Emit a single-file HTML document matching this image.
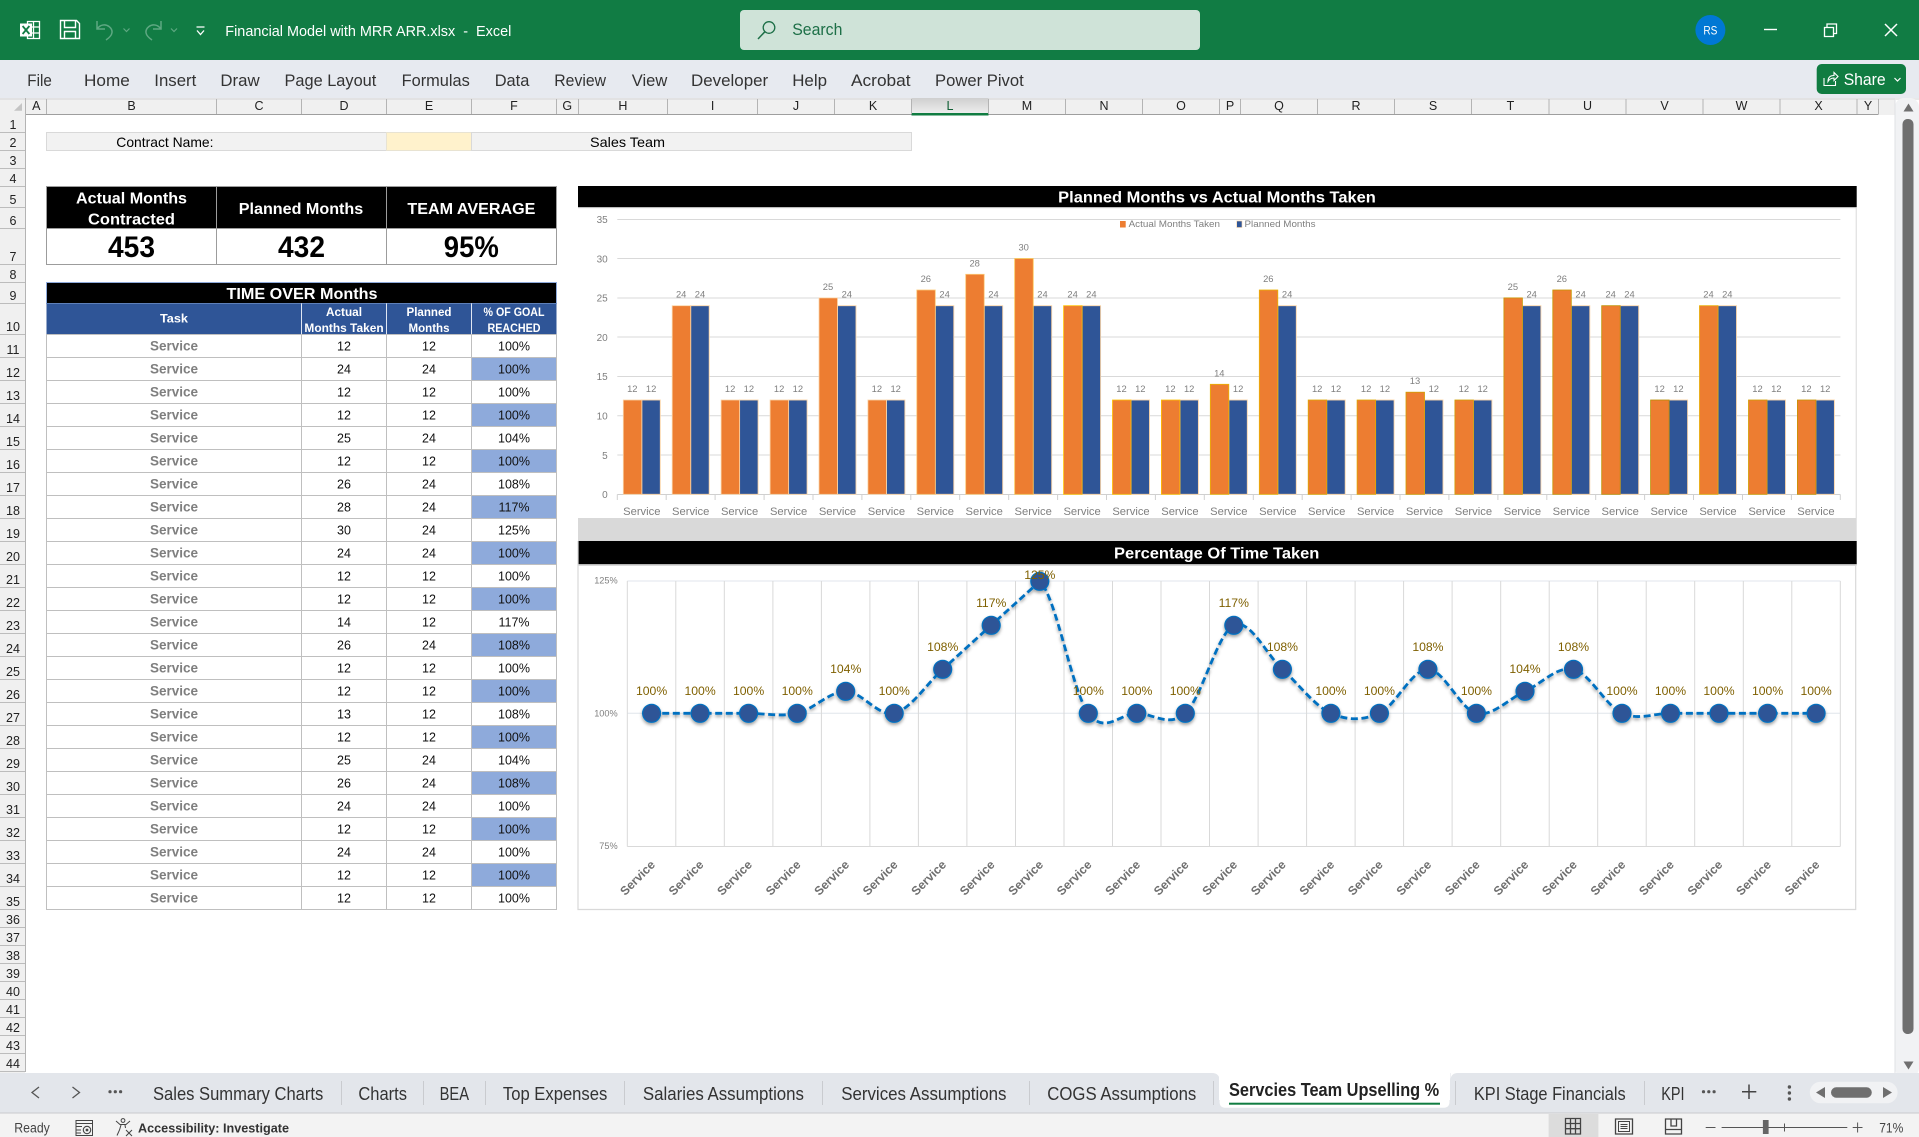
<!DOCTYPE html>
<html lang="en">
<head>
<meta charset="utf-8">
<title>Financial Model with MRR ARR.xlsx - Excel</title>
<style>
html,body{margin:0;padding:0;background:#fff;width:1919px;height:1137px;overflow:hidden}
svg{display:block}
text{font-family:"Liberation Sans",sans-serif;white-space:pre}
.rt text{fill:#333;font-size:17px}
.tb text{fill:#333;font-size:18.5px}
.rn text{fill:#222;font-size:12.5px;text-anchor:middle}
.cn text{fill:#222;font-size:12.5px;text-anchor:middle}
.s text{fill:#7f7f7f;font-size:13.5px;font-weight:bold;text-anchor:middle}
.n text{fill:#111;font-size:12.5px;text-anchor:middle}
.dl text{fill:#7f7f7f;font-size:9.4px;text-anchor:middle}
.ax text{fill:#7f7f7f;font-size:10px;text-anchor:end}
.cx text{fill:#7f7f7f;font-size:11.2px;text-anchor:middle}
.pl text{fill:#7f6000;font-size:12.2px;text-anchor:middle}
.rx text{fill:#6f6f6f;font-size:12.2px;font-weight:bold;text-anchor:middle}
.hd text{fill:#fff;font-size:12px;font-weight:bold;text-anchor:middle}
.kp text{fill:#fff;font-size:16px;font-weight:bold;text-anchor:middle}
.kv text{fill:#000;font-size:30px;font-weight:bold;text-anchor:middle}
</style>
</head>
<body>
<svg xmlns="http://www.w3.org/2000/svg" width="1919" height="1137" viewBox="0 0 1919 1137">
<defs>
<filter id="sh" x="-10%" y="-20%" width="120%" height="150%"><feDropShadow dx="0" dy="2" stdDeviation="1.6" flood-color="#000" flood-opacity=".38"/></filter>
<linearGradient id="rs" x1="0" y1="0" x2="0" y2="1"><stop offset="0" stop-color="#cfcfcf"/><stop offset="1" stop-color="#efefef"/></linearGradient>
</defs>

<!-- title bar -->
<rect x="0" y="0" width="1919" height="60" fill="#117c44"/>
<g>
<path d="M27.5 21.5H39.5V38.5H27.5ZM27.5 27H39.5M27.5 33H39.5M33.5 21.5V38.5" fill="none" stroke="#fff" stroke-width="1.3"/>
<rect x="20" y="23.5" width="12" height="13" fill="#fff"/>
<path d="M22.6 26 29.4 34M29.4 26 22.6 34" stroke="#117c44" stroke-width="1.8" fill="none"/>
<path d="M60.5 20.5H76.5L79.5 23.5V38.5H60.5ZM64.5 20.5V27.5H75.5V20.5M64.5 38.5V31.5H75.5V38.5" fill="none" stroke="#fff" stroke-width="1.4"/>
<path d="M97 21V29H105M97.5 28.5C100 25 105 23.5 109 26.5 113.5 30 113.5 35 106 40" fill="none" stroke="#5ea882" stroke-width="1.5"/>
<path d="M123.5 28.5 126.5 31.5 129.5 28.5" fill="none" stroke="#5ea882" stroke-width="1.2"/>
<path d="M161 21V29H153M160.5 28.5C158 25 153 23.5 149 26.5 144.5 30 144.5 35 152 40" fill="none" stroke="#5ea882" stroke-width="1.5"/>
<path d="M171 28.5 174 31.5 177 28.5" fill="none" stroke="#5ea882" stroke-width="1.2"/>
<path d="M196.5 27H204.5M197 30.5 200.5 34.5 204 30.5" fill="none" stroke="#fff" stroke-width="1.3"/>
</g>
<text x="225.3" y="36" font-size="15" fill="#fff" textLength="286" lengthAdjust="spacingAndGlyphs">Financial Model with MRR ARR.xlsx  -  Excel</text>
<rect x="740" y="10" width="460" height="40" rx="4" fill="#cfe3d8"/>
<circle cx="769" cy="27.5" r="5.8" fill="none" stroke="#1d6f47" stroke-width="1.3"/>
<path d="M764.8 31.8 758 39" fill="none" stroke="#1d6f47" stroke-width="1.5"/>
<text x="792.2" y="35" font-size="16.5" fill="#1d6f47" textLength="50.2" lengthAdjust="spacingAndGlyphs">Search</text>
<ellipse cx="1710.4" cy="30" rx="15" ry="15" fill="#0078d4"/>
<text x="1710.4" y="34.5" font-size="12" fill="#fff" text-anchor="middle" textLength="14" lengthAdjust="spacingAndGlyphs">RS</text>
<path d="M1764 29.5H1777" stroke="#fff" stroke-width="1.4" fill="none"/>
<path d="M1824.5 27.5H1833.5V36.5H1824.5ZM1827 27V24H1836.5V33.5H1834" fill="none" stroke="#fff" stroke-width="1.3"/>
<path d="M1885 24 1897 36M1897 24 1885 36" stroke="#fff" stroke-width="1.5" fill="none"/>

<!-- ribbon tabs -->
<rect x="0" y="60" width="1919" height="38" fill="#e7eaf0"/>
<g class="rt">
<text x="27.3" y="86" textLength="24.5" lengthAdjust="spacingAndGlyphs">File</text>
<text x="84" y="86" textLength="45.8" lengthAdjust="spacingAndGlyphs">Home</text>
<text x="154.3" y="86" textLength="42" lengthAdjust="spacingAndGlyphs">Insert</text>
<text x="220.4" y="86" textLength="39.2" lengthAdjust="spacingAndGlyphs">Draw</text>
<text x="284.5" y="86" textLength="91.8" lengthAdjust="spacingAndGlyphs">Page Layout</text>
<text x="401.6" y="86" textLength="68.2" lengthAdjust="spacingAndGlyphs">Formulas</text>
<text x="494.7" y="86" textLength="34.7" lengthAdjust="spacingAndGlyphs">Data</text>
<text x="554.3" y="86" textLength="51.7" lengthAdjust="spacingAndGlyphs">Review</text>
<text x="631.8" y="86" textLength="35.5" lengthAdjust="spacingAndGlyphs">View</text>
<text x="691" y="86" textLength="77.2" lengthAdjust="spacingAndGlyphs">Developer</text>
<text x="792.2" y="86" textLength="34.8" lengthAdjust="spacingAndGlyphs">Help</text>
<text x="851" y="86" textLength="59.6" lengthAdjust="spacingAndGlyphs">Acrobat</text>
<text x="935" y="86" textLength="88.7" lengthAdjust="spacingAndGlyphs">Power Pivot</text>
</g>
<rect x="1816.7" y="64" width="89.3" height="30" rx="5" fill="#107c41"/>
<path d="M1824 78V85.5H1835.5V81M1828 81.5C1828 77.5 1830 75.5 1834 75.5V72.5L1838 76.5 1834 80.5V78C1831.5 78 1829.5 79 1828 81.5Z" fill="none" stroke="#fff" stroke-width="1.1"/>
<text x="1843.7" y="85" font-size="17" fill="#fff" textLength="42" lengthAdjust="spacingAndGlyphs">Share</text>
<path d="M1894.5 78 1897.5 81 1900.5 78" fill="none" stroke="#fff" stroke-width="1.2"/>

<!-- column headers -->
<rect x="0" y="98" width="1895" height="17" fill="#f0f0f0"/>
<rect x="0" y="98" width="1919" height="2" fill="#d8d9db" opacity=".6"/>
<path d="M22 103V110.7H14Z" fill="#c4c4c4"/>
<rect x="911.5" y="98" width="77" height="16" fill="url(#rs)"/>
<path d="M26 114.5H1878.5" stroke="#9e9e9e" stroke-width="1" fill="none"/>
<rect x="911.5" y="113" width="77" height="2.5" fill="#107c41"/>
<path d="M25.5 98V1072M46.5 99V114M216.5 99V114M301.5 99V114M386.5 99V114M471.5 99V114M556.5 99V114M578.5 99V114M667.5 99V114M757.5 99V114M834.5 99V114M911.5 99V114M988.5 99V114M1065.5 99V114M1142.5 99V114M1219.5 99V114M1240.5 99V114M1317.5 99V114M1394.5 99V114M1471.5 99V114M1549 99V114M1626 99V114M1703 99V114M1780 99V114M1857 99V114M1878.5 99V114" stroke="#b4b4b4" stroke-width="1" fill="none"/>
<g class="cn">
<text x="36.3" y="110">A</text><text x="131.5" y="110">B</text><text x="259" y="110">C</text><text x="344" y="110">D</text><text x="429" y="110">E</text><text x="514" y="110">F</text><text x="567.3" y="110">G</text><text x="622.9" y="110">H</text><text x="712.6" y="110">I</text><text x="796" y="110">J</text><text x="873" y="110">K</text><text x="950" y="110" style="fill:#0f5f34">L</text><text x="1027" y="110">M</text><text x="1104" y="110">N</text><text x="1181" y="110">O</text><text x="1230" y="110">P</text><text x="1279" y="110">Q</text><text x="1356" y="110">R</text><text x="1433" y="110">S</text><text x="1510.4" y="110">T</text><text x="1587.5" y="110">U</text><text x="1664.5" y="110">V</text><text x="1741.5" y="110">W</text><text x="1818.5" y="110">X</text><text x="1868" y="110">Y</text>
</g>

<!-- row headers -->
<rect x="0" y="115" width="25" height="958" fill="#f0f0f0"/>
<path d="M0 132.5H25M0 150.5H25M0 168.5H25M0 186.5H25M0 207.5H25M0 228.5H25M0 264.5H25M0 282.5H25M0 303.5H25M0 334.5H25M0 357.5H25M0 380.5H25M0 403.5H25M0 426.5H25M0 449.5H25M0 472.5H25M0 495.5H25M0 518.5H25M0 541.5H25M0 564.5H25M0 587.5H25M0 610.5H25M0 633.5H25M0 656.5H25M0 679.5H25M0 702.5H25M0 725.5H25M0 748.5H25M0 771.5H25M0 794.5H25M0 817.5H25M0 840.5H25M0 863.5H25M0 886.5H25M0 909.5H25M0 927.5H25M0 945.5H25M0 963.5H25M0 981.5H25M0 999.5H25M0 1017.5H25M0 1035.5H25M0 1053.5H25M0 1071.5H25" stroke="#bcbcbc" stroke-width="1" fill="none"/>
<g class="rn">
<text x="13" y="129">1</text><text x="13" y="147">2</text><text x="13" y="165">3</text><text x="13" y="183">4</text><text x="13" y="204">5</text><text x="13" y="225">6</text><text x="13" y="261">7</text><text x="13" y="279">8</text><text x="13" y="300">9</text><text x="13" y="331">10</text><text x="13" y="354">11</text><text x="13" y="377">12</text><text x="13" y="400">13</text><text x="13" y="423">14</text><text x="13" y="446">15</text><text x="13" y="469">16</text><text x="13" y="492">17</text><text x="13" y="515">18</text><text x="13" y="538">19</text><text x="13" y="561">20</text><text x="13" y="584">21</text><text x="13" y="607">22</text><text x="13" y="630">23</text><text x="13" y="653">24</text><text x="13" y="676">25</text><text x="13" y="699">26</text><text x="13" y="722">27</text><text x="13" y="745">28</text><text x="13" y="768">29</text><text x="13" y="791">30</text><text x="13" y="814">31</text><text x="13" y="837">32</text><text x="13" y="860">33</text><text x="13" y="883">34</text><text x="13" y="906">35</text><text x="13" y="924">36</text><text x="13" y="942">37</text><text x="13" y="960">38</text><text x="13" y="978">39</text><text x="13" y="996">40</text><text x="13" y="1014">41</text><text x="13" y="1032">42</text><text x="13" y="1050">43</text><text x="13" y="1068">44</text>
</g>

<!-- contract row -->
<rect x="46.5" y="132.5" width="340" height="18" fill="#f2f2f2" stroke="#d9d9d9"/>
<rect x="386.5" y="132.5" width="85" height="18" fill="#fff2cc" stroke="#e8e3d2"/>
<rect x="471.5" y="132.5" width="440" height="18" fill="#f2f2f2" stroke="#d9d9d9"/>
<text x="116.3" y="147" font-size="14" fill="#000" textLength="97.2" lengthAdjust="spacingAndGlyphs">Contract Name:</text>
<text x="590" y="147" font-size="14" fill="#000" textLength="75" lengthAdjust="spacingAndGlyphs">Sales Team</text>

<!-- KPI block -->
<rect x="46.5" y="186.5" width="510" height="42" fill="#000"/>
<rect x="46.5" y="228.5" width="510" height="36" fill="#fff"/>
<path d="M46.5 186.5H556.5V264.5H46.5ZM46.5 228.5H556.5M216.5 186.5V264.5M386.5 186.5V264.5" fill="none" stroke="#9c9c9c" stroke-width="1"/>
<g class="kp">
<text x="131.5" y="203.5" textLength="111" lengthAdjust="spacingAndGlyphs">Actual Months</text>
<text x="131.5" y="224.5" textLength="87" lengthAdjust="spacingAndGlyphs">Contracted</text>
<text x="301" y="214" textLength="124.5" lengthAdjust="spacingAndGlyphs">Planned Months</text>
<text x="471.4" y="214" textLength="128" lengthAdjust="spacingAndGlyphs">TEAM AVERAGE</text>
</g>
<g class="kv">
<text x="131.5" y="257" textLength="47" lengthAdjust="spacingAndGlyphs">453</text>
<text x="301.5" y="257" textLength="47" lengthAdjust="spacingAndGlyphs">432</text>
<text x="471.3" y="257" textLength="55" lengthAdjust="spacingAndGlyphs">95%</text>
</g>

<!-- table -->
<rect x="46.5" y="282.5" width="510" height="21" fill="#000" stroke="#8eaadb"/>
<text x="302" y="299" font-size="16" font-weight="bold" fill="#fff" text-anchor="middle" textLength="151" lengthAdjust="spacingAndGlyphs">TIME OVER Months</text>
<rect x="46.5" y="303.5" width="510" height="31" fill="#2f5597"/>
<path d="M301.5 303.5V334M386.5 303.5V334M471.5 303.5V334" stroke="#dfe6f3" stroke-width="1" fill="none"/>
<g class="hd">
<text x="174" y="322.5" textLength="28" lengthAdjust="spacingAndGlyphs">Task</text>
<text x="344" y="316" textLength="36" lengthAdjust="spacingAndGlyphs">Actual</text>
<text x="344" y="332" textLength="79.2" lengthAdjust="spacingAndGlyphs">Months Taken</text>
<text x="429" y="316" textLength="45" lengthAdjust="spacingAndGlyphs">Planned</text>
<text x="429" y="332" textLength="41" lengthAdjust="spacingAndGlyphs">Months</text>
<text x="514" y="316" textLength="61" lengthAdjust="spacingAndGlyphs">% OF GOAL</text>
<text x="514" y="332" textLength="53" lengthAdjust="spacingAndGlyphs">REACHED</text>
</g>
<g fill="#8eaadb">
<rect x="472" y="358" width="84.5" height="22"/><rect x="472" y="404" width="84.5" height="22"/><rect x="472" y="450" width="84.5" height="22"/><rect x="472" y="496" width="84.5" height="22"/><rect x="472" y="542" width="84.5" height="22"/><rect x="472" y="588" width="84.5" height="22"/><rect x="472" y="634" width="84.5" height="22"/><rect x="472" y="680" width="84.5" height="22"/><rect x="472" y="726" width="84.5" height="22"/><rect x="472" y="772" width="84.5" height="22"/><rect x="472" y="818" width="84.5" height="22"/><rect x="472" y="864" width="84.5" height="22"/>
</g>
<path d="M46.5 334.5H556.5M46.5 357.5H556.5M46.5 380.5H556.5M46.5 403.5H556.5M46.5 426.5H556.5M46.5 449.5H556.5M46.5 472.5H556.5M46.5 495.5H556.5M46.5 518.5H556.5M46.5 541.5H556.5M46.5 564.5H556.5M46.5 587.5H556.5M46.5 610.5H556.5M46.5 633.5H556.5M46.5 656.5H556.5M46.5 679.5H556.5M46.5 702.5H556.5M46.5 725.5H556.5M46.5 748.5H556.5M46.5 771.5H556.5M46.5 794.5H556.5M46.5 817.5H556.5M46.5 840.5H556.5M46.5 863.5H556.5M46.5 886.5H556.5M46.5 909.5H556.5M46.5 334V910M301.5 334V910M386.5 334V910M471.5 334V910M556.5 334V910" stroke="#bfbfbf" stroke-width="1" fill="none"/>
<g class="s">
<text x="174" y="350.3">Service</text><text x="174" y="373.3">Service</text><text x="174" y="396.3">Service</text><text x="174" y="419.3">Service</text><text x="174" y="442.3">Service</text><text x="174" y="465.3">Service</text><text x="174" y="488.3">Service</text><text x="174" y="511.3">Service</text><text x="174" y="534.3">Service</text><text x="174" y="557.3">Service</text><text x="174" y="580.3">Service</text><text x="174" y="603.3">Service</text><text x="174" y="626.3">Service</text><text x="174" y="649.3">Service</text><text x="174" y="672.3">Service</text><text x="174" y="695.3">Service</text><text x="174" y="718.3">Service</text><text x="174" y="741.3">Service</text><text x="174" y="764.3">Service</text><text x="174" y="787.3">Service</text><text x="174" y="810.3">Service</text><text x="174" y="833.3">Service</text><text x="174" y="856.3">Service</text><text x="174" y="879.3">Service</text><text x="174" y="902.3">Service</text>
</g>
<g class="n">
<text x="344" y="350.3">12</text><text x="429" y="350.3">12</text><text x="514" y="350.3">100%</text>
<text x="344" y="373.3">24</text><text x="429" y="373.3">24</text><text x="514" y="373.3">100%</text>
<text x="344" y="396.3">12</text><text x="429" y="396.3">12</text><text x="514" y="396.3">100%</text>
<text x="344" y="419.3">12</text><text x="429" y="419.3">12</text><text x="514" y="419.3">100%</text>
<text x="344" y="442.3">25</text><text x="429" y="442.3">24</text><text x="514" y="442.3">104%</text>
<text x="344" y="465.3">12</text><text x="429" y="465.3">12</text><text x="514" y="465.3">100%</text>
<text x="344" y="488.3">26</text><text x="429" y="488.3">24</text><text x="514" y="488.3">108%</text>
<text x="344" y="511.3">28</text><text x="429" y="511.3">24</text><text x="514" y="511.3">117%</text>
<text x="344" y="534.3">30</text><text x="429" y="534.3">24</text><text x="514" y="534.3">125%</text>
<text x="344" y="557.3">24</text><text x="429" y="557.3">24</text><text x="514" y="557.3">100%</text>
<text x="344" y="580.3">12</text><text x="429" y="580.3">12</text><text x="514" y="580.3">100%</text>
<text x="344" y="603.3">12</text><text x="429" y="603.3">12</text><text x="514" y="603.3">100%</text>
<text x="344" y="626.3">14</text><text x="429" y="626.3">12</text><text x="514" y="626.3">117%</text>
<text x="344" y="649.3">26</text><text x="429" y="649.3">24</text><text x="514" y="649.3">108%</text>
<text x="344" y="672.3">12</text><text x="429" y="672.3">12</text><text x="514" y="672.3">100%</text>
<text x="344" y="695.3">12</text><text x="429" y="695.3">12</text><text x="514" y="695.3">100%</text>
<text x="344" y="718.3">13</text><text x="429" y="718.3">12</text><text x="514" y="718.3">108%</text>
<text x="344" y="741.3">12</text><text x="429" y="741.3">12</text><text x="514" y="741.3">100%</text>
<text x="344" y="764.3">25</text><text x="429" y="764.3">24</text><text x="514" y="764.3">104%</text>
<text x="344" y="787.3">26</text><text x="429" y="787.3">24</text><text x="514" y="787.3">108%</text>
<text x="344" y="810.3">24</text><text x="429" y="810.3">24</text><text x="514" y="810.3">100%</text>
<text x="344" y="833.3">12</text><text x="429" y="833.3">12</text><text x="514" y="833.3">100%</text>
<text x="344" y="856.3">24</text><text x="429" y="856.3">24</text><text x="514" y="856.3">100%</text>
<text x="344" y="879.3">12</text><text x="429" y="879.3">12</text><text x="514" y="879.3">100%</text>
<text x="344" y="902.3">12</text><text x="429" y="902.3">12</text><text x="514" y="902.3">100%</text>
</g>

<!-- chart 1 -->
<rect x="578" y="186" width="1278.7" height="21.3" fill="#000"/>
<path d="M578 207.8H1856.7M1856.2 207.8V518" stroke="#d9d9d9" stroke-width="1" fill="none"/>
<text x="1217" y="202.5" font-size="16" font-weight="bold" fill="#fff" text-anchor="middle" textLength="317.6" lengthAdjust="spacingAndGlyphs">Planned Months vs Actual Months Taken</text>
<rect x="578" y="518" width="1278.7" height="23" fill="#d9d9d9"/>
<path d="M617.3 219.5H1840.4M617.3 258.5H1840.4M617.3 298H1840.4M617.3 337H1840.4M617.3 376.5H1840.4M617.3 415.7H1840.4M617.3 455H1840.4" stroke="#d9d9d9" stroke-width="1" fill="none"/>
<path d="M617.3 494.5H1840.4M617.3 494.5V500M666.2 494.5V500M715.1 494.5V500M764.1 494.5V500M813 494.5V500M861.9 494.5V500M910.8 494.5V500M959.7 494.5V500M1008.7 494.5V500M1057.6 494.5V500M1106.5 494.5V500M1155.4 494.5V500M1204.3 494.5V500M1253.3 494.5V500M1302.2 494.5V500M1351.1 494.5V500M1400 494.5V500M1448.9 494.5V500M1497.9 494.5V500M1546.8 494.5V500M1595.7 494.5V500M1644.6 494.5V500M1693.5 494.5V500M1742.5 494.5V500M1791.4 494.5V500M1840.3 494.5V500" stroke="#d0d0d0" stroke-width="1" fill="none"/>
<g class="ax">
<text x="607.7" y="223">35</text><text x="607.7" y="262.5">30</text><text x="607.7" y="301.5">25</text><text x="607.7" y="341">20</text><text x="607.7" y="380">15</text><text x="607.7" y="419.5">10</text><text x="607.7" y="459">5</text><text x="607.7" y="498">0</text>
</g>
<rect x="1120" y="221" width="5.7" height="6.5" fill="#ed7d31"/>
<text x="1128.6" y="227" font-size="9.5" fill="#7f7f7f" textLength="91.4" lengthAdjust="spacingAndGlyphs">Actual Months Taken</text>
<rect x="1236.7" y="221" width="5.3" height="6.5" fill="#2f5597" stroke="#fbd5a8" stroke-width=".6"/>
<text x="1244.5" y="227" font-size="9.5" fill="#7f7f7f" textLength="71" lengthAdjust="spacingAndGlyphs">Planned Months</text>

<!-- blue bars -->
<g fill="#2f5597" stroke="#fbd5a8" stroke-width=".9">
<rect x="641.8" y="400" width="18.5" height="94.3"/>
<rect x="690.7" y="305.7" width="18.5" height="188.6"/>
<rect x="739.6" y="400" width="18.5" height="94.3"/>
<rect x="788.6" y="400" width="18.5" height="94.3"/>
<rect x="837.5" y="305.7" width="18.5" height="188.6"/>
<rect x="886.4" y="400" width="18.5" height="94.3"/>
<rect x="935.3" y="305.7" width="18.5" height="188.6"/>
<rect x="984.2" y="305.7" width="18.5" height="188.6"/>
<rect x="1033.2" y="305.7" width="18.5" height="188.6"/>
<rect x="1082.1" y="305.7" width="18.5" height="188.6"/>
<rect x="1131" y="400" width="18.5" height="94.3"/>
<rect x="1179.9" y="400" width="18.5" height="94.3"/>
<rect x="1228.8" y="400" width="18.5" height="94.3"/>
<rect x="1277.8" y="305.7" width="18.5" height="188.6"/>
<rect x="1326.7" y="400" width="18.5" height="94.3"/>
<rect x="1375.6" y="400" width="18.5" height="94.3"/>
<rect x="1424.5" y="400" width="18.5" height="94.3"/>
<rect x="1473.4" y="400" width="18.5" height="94.3"/>
<rect x="1522.4" y="305.7" width="18.5" height="188.6"/>
<rect x="1571.3" y="305.7" width="18.5" height="188.6"/>
<rect x="1620.2" y="305.7" width="18.5" height="188.6"/>
<rect x="1669.1" y="400" width="18.5" height="94.3"/>
<rect x="1718" y="305.7" width="18.5" height="188.6"/>
<rect x="1767" y="400" width="18.5" height="94.3"/>
<rect x="1815.9" y="400" width="18.5" height="94.3"/>
</g>
<!-- orange bars -->
<g fill="#ed7d31" stroke-width=".8">
<rect x="623.3" y="400" width="18.5" height="94.3" stroke="#fbd5a8"/>
<rect x="672.2" y="305.7" width="18.5" height="188.6" stroke="#fbd5a8"/>
<rect x="721.1" y="400" width="18.5" height="94.3" stroke="#fbd5a8"/>
<rect x="770.1" y="400" width="18.5" height="94.3" stroke="#fbd5a8"/>
<rect x="819" y="297.9" width="18.5" height="196.4" stroke="#fbd5a8"/>
<rect x="867.9" y="400" width="18.5" height="94.3" stroke="#fbd5a8"/>
<rect x="916.8" y="290" width="18.5" height="204.3" stroke="#fcc977"/>
<rect x="965.7" y="274.3" width="18.5" height="220" stroke="#fcc977"/>
<rect x="1014.7" y="258.6" width="18.5" height="235.7" stroke="#fcc24a"/>
<rect x="1063.6" y="305.7" width="18.5" height="188.6" stroke="#ffc000"/>
<rect x="1112.5" y="400" width="18.5" height="94.3" stroke="#ffc000"/>
<rect x="1161.4" y="400" width="18.5" height="94.3" stroke="#ffc000"/>
<rect x="1210.3" y="384.3" width="18.5" height="110" stroke="#ecb300"/>
<rect x="1259.3" y="290" width="18.5" height="204.3" stroke="#ecb300"/>
<rect x="1308.2" y="400" width="18.5" height="94.3" stroke="#e0a800"/>
<rect x="1357.1" y="400" width="18.5" height="94.3" stroke="#e0a800"/>
<rect x="1406" y="392.2" width="18.5" height="102.1" stroke="#d29e00"/>
<rect x="1454.9" y="400" width="18.5" height="94.3" stroke="#d29e00"/>
<rect x="1503.9" y="297.9" width="18.5" height="196.4" stroke="#c69500"/>
<rect x="1552.8" y="290" width="18.5" height="204.3" stroke="#c69500"/>
<rect x="1601.7" y="305.7" width="18.5" height="188.6" stroke="#bc8e00"/>
<rect x="1650.6" y="400" width="18.5" height="94.3" stroke="#b88d00"/>
<rect x="1699.5" y="305.7" width="18.5" height="188.6" stroke="#e6ac00"/>
<rect x="1748.5" y="400" width="18.5" height="94.3" stroke="#d29e00"/>
<rect x="1797.4" y="400" width="18.5" height="94.3" stroke="#c69500"/>
</g>
<!-- bar labels -->
<g class="dl">
<text x="632.3" y="392">12</text><text x="651.1" y="392">12</text>
<text x="681.2" y="297.7">24</text><text x="700" y="297.7">24</text>
<text x="730.1" y="392">12</text><text x="748.9" y="392">12</text>
<text x="779.1" y="392">12</text><text x="797.9" y="392">12</text>
<text x="828" y="289.9">25</text><text x="846.8" y="297.7">24</text>
<text x="876.9" y="392">12</text><text x="895.7" y="392">12</text>
<text x="925.8" y="282">26</text><text x="944.6" y="297.7">24</text>
<text x="974.7" y="266.3">28</text><text x="993.5" y="297.7">24</text>
<text x="1023.7" y="250.6">30</text><text x="1042.5" y="297.7">24</text>
<text x="1072.6" y="297.7">24</text><text x="1091.4" y="297.7">24</text>
<text x="1121.5" y="392">12</text><text x="1140.3" y="392">12</text>
<text x="1170.4" y="392">12</text><text x="1189.2" y="392">12</text>
<text x="1219.3" y="376.3">14</text><text x="1238.1" y="392">12</text>
<text x="1268.3" y="282">26</text><text x="1287.1" y="297.7">24</text>
<text x="1317.2" y="392">12</text><text x="1336" y="392">12</text>
<text x="1366.1" y="392">12</text><text x="1384.9" y="392">12</text>
<text x="1415" y="384.2">13</text><text x="1433.8" y="392">12</text>
<text x="1463.9" y="392">12</text><text x="1482.7" y="392">12</text>
<text x="1512.9" y="289.9">25</text><text x="1531.7" y="297.7">24</text>
<text x="1561.8" y="282">26</text><text x="1580.6" y="297.7">24</text>
<text x="1610.7" y="297.7">24</text><text x="1629.5" y="297.7">24</text>
<text x="1659.6" y="392">12</text><text x="1678.4" y="392">12</text>
<text x="1708.5" y="297.7">24</text><text x="1727.3" y="297.7">24</text>
<text x="1757.5" y="392">12</text><text x="1776.3" y="392">12</text>
<text x="1806.4" y="392">12</text><text x="1825.2" y="392">12</text>
</g>
<g class="cx">
<text x="641.8" y="515">Service</text><text x="690.7" y="515">Service</text><text x="739.6" y="515">Service</text><text x="788.6" y="515">Service</text><text x="837.5" y="515">Service</text><text x="886.4" y="515">Service</text><text x="935.3" y="515">Service</text><text x="984.2" y="515">Service</text><text x="1033.2" y="515">Service</text><text x="1082.1" y="515">Service</text><text x="1131" y="515">Service</text><text x="1179.9" y="515">Service</text><text x="1228.8" y="515">Service</text><text x="1277.8" y="515">Service</text><text x="1326.7" y="515">Service</text><text x="1375.6" y="515">Service</text><text x="1424.5" y="515">Service</text><text x="1473.4" y="515">Service</text><text x="1522.4" y="515">Service</text><text x="1571.3" y="515">Service</text><text x="1620.2" y="515">Service</text><text x="1669.1" y="515">Service</text><text x="1718" y="515">Service</text><text x="1767" y="515">Service</text><text x="1815.9" y="515">Service</text>
</g>

<!-- chart 2 -->
<rect x="578" y="541" width="1278.7" height="23.3" fill="#000"/>
<rect x="578" y="564.3" width="1278.7" height="1.7" fill="#d9d9d9"/>
<text x="1216.7" y="558.5" font-size="16" font-weight="bold" fill="#fff" text-anchor="middle" textLength="205.3" lengthAdjust="spacingAndGlyphs">Percentage Of Time Taken</text>
<path d="M578 541V909.5H1855.7V565" stroke="#d9d9d9" stroke-width="1.2" fill="none"/>
<path d="M627.3 581H1840.3M627.3 713.3H1840.3" stroke="#e0e6ec" stroke-width="1" fill="none"/>
<path d="M627.3 581V846.5M675.8 581V846.5M724.3 581V846.5M772.9 581V846.5M821.4 581V846.5M869.9 581V846.5M918.4 581V846.5M966.9 581V846.5M1015.5 581V846.5M1064 581V846.5M1112.5 581V846.5M1161 581V846.5M1209.5 581V846.5M1258.1 581V846.5M1306.6 581V846.5M1355.1 581V846.5M1403.6 581V846.5M1452.1 581V846.5M1500.7 581V846.5M1549.2 581V846.5M1597.7 581V846.5M1646.2 581V846.5M1694.7 581V846.5M1743.3 581V846.5M1791.8 581V846.5M1840.3 581V846.5M627.3 846.5H1840.3" stroke="#d9d9d9" stroke-width="1" fill="none"/>
<g font-size="9.2" fill="#7f7f7f" text-anchor="end">
<text x="617.7" y="583.5">125%</text>
<text x="617.7" y="716.5">100%</text>
<text x="617.7" y="849">75%</text>
</g>
<g filter="url(#sh)">
<path d="M651.6 713.3C667.8 713.3 683.9 713.3 700.1 713.3C716.3 713.3 732.4 713.3 748.6 713.3C764.8 713.3 781 717 797.2 713.3C813.4 709.6 829.5 691.3 845.7 691.3C861.9 691.3 878 717 894.2 713.3C910.4 709.6 926.5 684 942.7 669.3C958.9 654.6 975 640 991.2 625.3C1007.4 610.6 1023.6 596 1039.8 581.3C1056 596 1072.1 691.3 1088.3 713.3C1104.5 735.3 1120.6 713.3 1136.8 713.3C1153 713.3 1169.1 728 1185.3 713.3C1201.5 698.6 1217.6 632.6 1233.8 625.3C1250 618 1266.2 654.6 1282.4 669.3C1298.6 684 1314.7 706 1330.9 713.3C1347.1 720.6 1363.2 720.6 1379.4 713.3C1395.6 706 1411.7 669.3 1427.9 669.3C1444.1 669.3 1460.2 709.6 1476.4 713.3C1492.6 717 1508.8 698.6 1525 691.3C1541.2 684 1557.3 665.6 1573.5 669.3C1589.7 673 1605.8 706 1622 713.3C1638.2 720.6 1654.3 713.3 1670.5 713.3L1816.1 713.3" fill="none" stroke="#0070c0" stroke-width="2.8" stroke-dasharray="7 3.6"/>
<g fill="#2f5597" stroke="#0070c0" stroke-width="1.2">
<circle cx="651.6" cy="713.3" r="9"/><circle cx="700.1" cy="713.3" r="9"/><circle cx="748.6" cy="713.3" r="9"/><circle cx="797.2" cy="713.3" r="9"/><circle cx="845.7" cy="691.3" r="9"/><circle cx="894.2" cy="713.3" r="9"/><circle cx="942.7" cy="669.3" r="9"/><circle cx="991.2" cy="625.3" r="9"/><circle cx="1039.8" cy="581.3" r="9"/><circle cx="1088.3" cy="713.3" r="9"/><circle cx="1136.8" cy="713.3" r="9"/><circle cx="1185.3" cy="713.3" r="9"/><circle cx="1233.8" cy="625.3" r="9"/><circle cx="1282.4" cy="669.3" r="9"/><circle cx="1330.9" cy="713.3" r="9"/><circle cx="1379.4" cy="713.3" r="9"/><circle cx="1427.9" cy="669.3" r="9"/><circle cx="1476.4" cy="713.3" r="9"/><circle cx="1525" cy="691.3" r="9"/><circle cx="1573.5" cy="669.3" r="9"/><circle cx="1622" cy="713.3" r="9"/><circle cx="1670.5" cy="713.3" r="9"/><circle cx="1719" cy="713.3" r="9"/><circle cx="1767.6" cy="713.3" r="9"/><circle cx="1816.1" cy="713.3" r="9"/>
</g>
</g>
<g class="pl">
<text x="651.6" y="695">100%</text><text x="700.1" y="695">100%</text><text x="748.6" y="695">100%</text><text x="797.2" y="695">100%</text><text x="845.7" y="673">104%</text><text x="894.2" y="695">100%</text><text x="942.7" y="651">108%</text><text x="991.2" y="607">117%</text><text x="1039.8" y="579">125%</text><text x="1088.3" y="695">100%</text><text x="1136.8" y="695">100%</text><text x="1185.3" y="695">100%</text><text x="1233.8" y="607">117%</text><text x="1282.4" y="651">108%</text><text x="1330.9" y="695">100%</text><text x="1379.4" y="695">100%</text><text x="1427.9" y="651">108%</text><text x="1476.4" y="695">100%</text><text x="1525" y="673">104%</text><text x="1573.5" y="651">108%</text><text x="1622" y="695">100%</text><text x="1670.5" y="695">100%</text><text x="1719" y="695">100%</text><text x="1767.6" y="695">100%</text><text x="1816.1" y="695">100%</text>
</g>
<g class="rx">
<text transform="translate(637.6 878) rotate(-45)" y="4">Service</text><text transform="translate(686.1 878) rotate(-45)" y="4">Service</text><text transform="translate(734.6 878) rotate(-45)" y="4">Service</text><text transform="translate(783.2 878) rotate(-45)" y="4">Service</text><text transform="translate(831.7 878) rotate(-45)" y="4">Service</text><text transform="translate(880.2 878) rotate(-45)" y="4">Service</text><text transform="translate(928.7 878) rotate(-45)" y="4">Service</text><text transform="translate(977.2 878) rotate(-45)" y="4">Service</text><text transform="translate(1025.8 878) rotate(-45)" y="4">Service</text><text transform="translate(1074.3 878) rotate(-45)" y="4">Service</text><text transform="translate(1122.8 878) rotate(-45)" y="4">Service</text><text transform="translate(1171.3 878) rotate(-45)" y="4">Service</text><text transform="translate(1219.8 878) rotate(-45)" y="4">Service</text><text transform="translate(1268.4 878) rotate(-45)" y="4">Service</text><text transform="translate(1316.9 878) rotate(-45)" y="4">Service</text><text transform="translate(1365.4 878) rotate(-45)" y="4">Service</text><text transform="translate(1413.9 878) rotate(-45)" y="4">Service</text><text transform="translate(1462.4 878) rotate(-45)" y="4">Service</text><text transform="translate(1511 878) rotate(-45)" y="4">Service</text><text transform="translate(1559.5 878) rotate(-45)" y="4">Service</text><text transform="translate(1608 878) rotate(-45)" y="4">Service</text><text transform="translate(1656.5 878) rotate(-45)" y="4">Service</text><text transform="translate(1705 878) rotate(-45)" y="4">Service</text><text transform="translate(1753.6 878) rotate(-45)" y="4">Service</text><text transform="translate(1802.1 878) rotate(-45)" y="4">Service</text>
</g>

<!-- vertical scrollbar -->
<rect x="1895" y="98" width="24" height="979" rx="9" fill="#f1f2f4"/>
<path d="M1895 100V1075" stroke="#dfe1e5" stroke-width="1" fill="none"/>
<path d="M1908.5 103.5 1913.5 111.5H1903.5Z" fill="#6f6f6f"/>
<rect x="1902.5" y="119" width="11" height="915" rx="5" fill="#6f6f6f"/>
<path d="M1908.5 1069.5 1913.5 1061.5H1903.5Z" fill="#6f6f6f"/>

<!-- sheet tabs -->
<rect x="0" y="1073" width="1219" height="40" fill="#e3e6eb"/>
<rect x="1450" y="1073" width="469" height="40" fill="#e3e6eb"/>
<rect x="1219" y="1100" width="231" height="13" fill="#e3e6eb"/>
<path d="M1212 1073H1219.6V1080C1219.6 1076 1217 1073 1212 1073Z" fill="#fff"/>
<path d="M1458 1073H1450.5V1080C1450.5 1076 1453 1073 1458 1073Z" fill="#fff"/>
<path d="M1219.6 1073H1449.5V1102C1449.5 1105.5 1447.5 1107.7 1444 1107.7H1225C1221.5 1107.7 1219.6 1105.5 1219.6 1102Z" fill="#fff"/>
<rect x="0" y="1112.5" width="1919" height="1" fill="#c9cacc"/>
<path d="M39 1087 32 1092.5 39 1098M72.5 1087 79.5 1092.5 72.5 1098" fill="none" stroke="#555" stroke-width="1.3"/>
<g fill="#555">
<circle cx="110" cy="1091.7" r="1.6"/><circle cx="115.3" cy="1091.7" r="1.6"/><circle cx="120.6" cy="1091.7" r="1.6"/>
<circle cx="1703.5" cy="1091.7" r="1.6"/><circle cx="1708.8" cy="1091.7" r="1.6"/><circle cx="1714.1" cy="1091.7" r="1.6"/>
<circle cx="1789.4" cy="1087" r="1.7"/><circle cx="1789.4" cy="1093" r="1.7"/><circle cx="1789.4" cy="1099" r="1.7"/>
</g>
<path d="M341.5 1081V1105M423.5 1081V1105M485.5 1081V1105M624.5 1081V1105M822.5 1081V1105M1029.5 1081V1105M1213.5 1081V1105M1455.5 1081V1105M1644.5 1081V1105" stroke="#c9cbcf" stroke-width="1" fill="none"/>
<g class="tb">
<text x="153" y="1100" textLength="170.3" lengthAdjust="spacingAndGlyphs">Sales Summary Charts</text>
<text x="358.4" y="1100" textLength="48.6" lengthAdjust="spacingAndGlyphs">Charts</text>
<text x="439.6" y="1100" textLength="29.4" lengthAdjust="spacingAndGlyphs">BEA</text>
<text x="502.9" y="1100" textLength="104.4" lengthAdjust="spacingAndGlyphs">Top Expenses</text>
<text x="642.9" y="1100" textLength="161.1" lengthAdjust="spacingAndGlyphs">Salaries Assumptions</text>
<text x="841.2" y="1100" textLength="165.3" lengthAdjust="spacingAndGlyphs">Services Assumptions</text>
<text x="1047.3" y="1100" textLength="149" lengthAdjust="spacingAndGlyphs">COGS Assumptions</text>
<text x="1473.9" y="1100" textLength="151.8" lengthAdjust="spacingAndGlyphs">KPI Stage Financials</text>
<text x="1661.2" y="1100" textLength="23.3" lengthAdjust="spacingAndGlyphs">KPI</text>
</g>
<text x="1229" y="1096" font-size="18.5" font-weight="bold" fill="#222" textLength="210.2" lengthAdjust="spacingAndGlyphs">Servcies Team Upselling %</text>
<rect x="1229" y="1102.7" width="211" height="2" fill="#107c41"/>
<path d="M1749 1084.5V1099M1742 1091.7H1756.3" stroke="#444" stroke-width="1.5" fill="none"/>
<rect x="1809.8" y="1081.7" width="87.8" height="21.6" rx="10.8" fill="#f1f2f4"/>
<path d="M1816 1092.5 1825 1087V1098Z" fill="#6f6f6f"/>
<rect x="1831" y="1087.3" width="40.8" height="10.4" rx="5.2" fill="#6f6f6f"/>
<path d="M1892 1092.5 1883 1087V1098Z" fill="#6f6f6f"/>

<!-- status bar -->
<rect x="0" y="1113.5" width="1919" height="23.5" fill="#f3f3f3"/>
<text x="14.3" y="1132.5" font-size="13.5" fill="#444" textLength="35.5" lengthAdjust="spacingAndGlyphs">Ready</text>
<path d="M76 1120.5H92.5V1135.5H76ZM76 1123.5H92.5M76 1126.5H82M76 1130H81M76 1133H81" fill="none" stroke="#444" stroke-width="1"/>
<circle cx="87" cy="1130" r="3.7" fill="#f3f3f3" stroke="#444" stroke-width="1.1"/><circle cx="87" cy="1130" r="1.4" fill="#444"/>
<circle cx="123" cy="1120.5" r="1.9" fill="none" stroke="#444" stroke-width="1"/>
<path d="M116 1121 120 1124.5H126L130 1121M121 1125 119.5 1130 117 1135.5M125 1125 125.5 1128M126 1130 132 1136M132 1130 126 1136" fill="none" stroke="#444" stroke-width="1"/>
<text x="138" y="1132.5" font-size="13" font-weight="bold" fill="#333" textLength="151" lengthAdjust="spacingAndGlyphs">Accessibility: Investigate</text>
<rect x="1548.6" y="1114" width="49.8" height="23" fill="#dcdcdc"/>
<path d="M1565.5 1118.5H1580.5V1134H1565.5ZM1565.5 1123.5H1580.5M1565.5 1128.7H1580.5M1570.5 1118.5V1134M1575.5 1118.5V1134" fill="none" stroke="#444" stroke-width="1.3"/>
<path d="M1615.5 1119H1632.5V1134H1615.5Z" fill="none" stroke="#444" stroke-width="1.3"/>
<path d="M1618.5 1121.5H1629.5V1131.5H1618.5ZM1620.5 1124.5H1627.5M1620.5 1126.5H1627.5M1620.5 1128.5H1627.5" fill="none" stroke="#444" stroke-width="1"/>
<path d="M1665.5 1119H1681.5V1134H1665.5ZM1665.5 1129.5H1681.5M1671 1119V1126H1676.5V1119" fill="none" stroke="#444" stroke-width="1.3"/>
<path d="M1705.7 1127.5H1715.5M1721.6 1127.5H1847.3M1784.5 1123.5V1131.5M1852.7 1127.5H1862.5M1857.6 1122.5V1132.5" fill="none" stroke="#555" stroke-width="1"/>
<rect x="1762.9" y="1120" width="5.7" height="14" fill="#666"/>
<text x="1879.2" y="1132.5" font-size="13.5" fill="#444" textLength="24.1" lengthAdjust="spacingAndGlyphs">71%</text>
</svg>
</body>
</html>
